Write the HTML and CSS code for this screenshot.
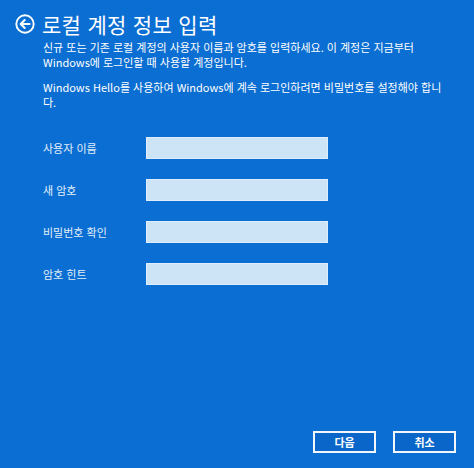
FILE: index.html
```html
<!DOCTYPE html>
<html lang="ko">
<head>
<meta charset="utf-8">
<link rel="stylesheet" href="styles.css">
</head>
<body>
<div class="page">
  <div class="header">
    <svg class="back" width="20" height="20" viewBox="0 0 20 20">
      <circle cx="10" cy="10" r="8.7" fill="none" stroke="#fff" stroke-width="1.9"/>
      <path d="M14.6 10 H5.8 M9.7 6 L5.7 10 L9.7 14" fill="none" stroke="#fff" stroke-width="2" stroke-linecap="round" stroke-linejoin="round"/>
    </svg>
    <h1 class="title">로컬 계정 정보 입력</h1>
  </div>
  <div class="content">
    <p class="para">신규 또는 기존 로컬 계정의 사용자 이름과 암호를 입력하세요. 이 계정은 지금부터 Windows에 로그인할 때 사용할 계정입니다.</p>
    <p class="para">Windows Hello를 사용하여 Windows에 계속 로그인하려면 비밀번호를 설정해야 합니<wbr>다.</p>
    <div class="form">
      <label class="label">사용자 이름</label><div class="input"></div>
      <label class="label">새 암호</label><div class="input"></div>
      <label class="label">비밀번호 확인</label><div class="input"></div>
      <label class="label">암호 힌트</label><div class="input"></div>
    </div>
  </div>
  <div class="buttons">
    <button class="btn">다음</button>
    <button class="btn">취소</button>
  </div>
</div>
</body>
</html>
```
FILE: styles.css
```css
html, body {
  margin: 0;
  padding: 0;
  background: #0b6ed2;
}
.page {
  height: 468px;
  display: flex;
  flex-direction: column;
  font-family: "Noto Sans CJK KR", "Noto Sans", sans-serif;
  color: #fff;
}
.header {
  display: flex;
  align-items: center;
  gap: 7px;
  padding: 13px 0 0 15px;
  height: 22px;
}
.back {
  display: block;
  flex: none;
}
.title {
  margin: 0;
  font-size: 21px;
  font-weight: 400;
  line-height: 22px;
  letter-spacing: 0.3px;
}
.content {
  padding: 5px 0 0 43px;
  width: 403px;
}
.para {
  margin: 0 0 10px 0;
  font-size: 11px;
  line-height: 15px;
}
.form {
  margin-top: 27px;
  display: grid;
  grid-template-columns: 103px 182px;
  grid-auto-rows: 22px;
  row-gap: 20px;
  align-items: center;
}
.label {
  font-size: 11px;
  color: #e3eefa;
}
.input {
  height: 22px;
  box-sizing: border-box;
  background: #cde3f6;
  border: 1px solid #deedfa;
}
.buttons {
  margin-top: auto;
  display: flex;
  justify-content: flex-end;
  gap: 17px;
  padding: 0 18px 15px 0;
}
.btn {
  width: 63px;
  height: 22px;
  box-sizing: border-box;
  border: 2px solid #f2f7fd;
  background: #0a66c8;
  color: #fff;
  font-family: "Noto Sans CJK KR", "Noto Sans", sans-serif;
  font-size: 11px;
  font-weight: 700;
  padding: 0;
  line-height: 18px;
}
```
